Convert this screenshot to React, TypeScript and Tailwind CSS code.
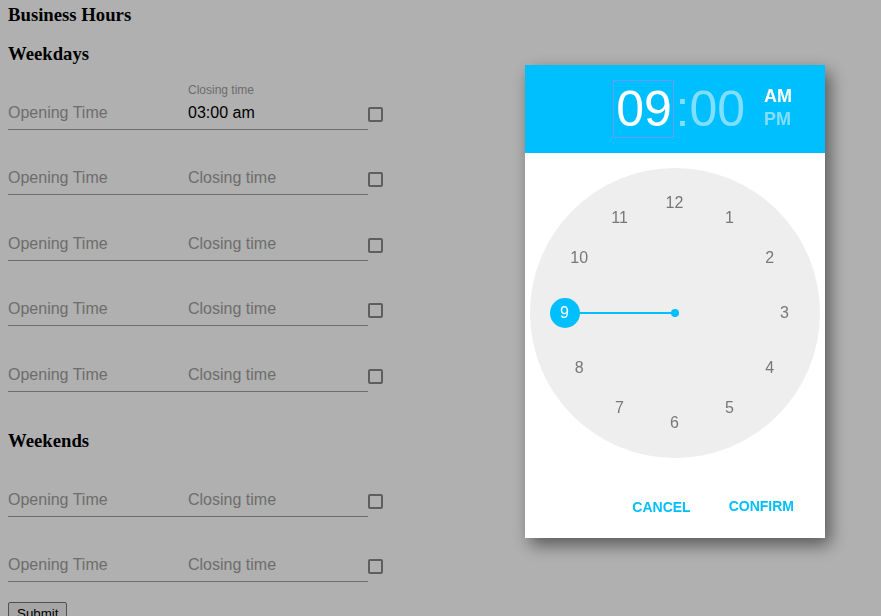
import React from "react";

const sans = "font-['Liberation_Sans',Arial,sans-serif]";
const serif = "font-['Liberation_Serif','Times_New_Roman',serif]";

type RowProps = { closing?: string };

const HoursRow = ({ closing }: RowProps) => {
  return (
    <div className="flex items-end h-[65.5px]">
      <div className="w-[180px] border-b border-[#9e9e9e]">
        <input
          readOnly
          placeholder="Opening Time"
          className={`${sans} block w-full bg-transparent outline-none text-[16px] leading-[19px] pt-[6px] pb-[7px] placeholder:text-[#9e9e9e]`}
        />
      </div>
      <div className="w-[180px] border-b border-[#9e9e9e]">
        {closing && (
          <div className={`${sans} text-[12px] leading-[14px] text-[#9e9e9e]`}>
            Closing time
          </div>
        )}
        <input
          readOnly
          value={closing ?? ""}
          placeholder="Closing time"
          className={`${sans} block w-full bg-transparent outline-none text-[16px] leading-[19px] pt-[6px] pb-[7px] text-black placeholder:text-[#9e9e9e]`}
        />
      </div>
      <input
        type="checkbox"
        className="appearance-none w-[15px] h-[15px] border-2 border-[#888] rounded-[2px] mb-[8px]"
      />
    </div>
  );
};

const ClockFace = () => {
  const hours = [12, 1, 2, 3, 4, 5, 6, 7, 8, 9, 10, 11];
  const r = 110;
  return (
    <div className="relative w-[290px] h-[290px] rounded-full bg-[#eeeeee] mx-auto">
      {/* hand */}
      <div className="absolute left-[34px] top-[144px] w-[111px] h-[2px] bg-[#00bfff]" />
      <div className="absolute left-[141px] top-[141px] w-[8px] h-[8px] rounded-full bg-[#00bfff]" />
      {hours.map((h, i) => {
        const a = (i * Math.PI) / 6;
        const x = 144.5 + r * Math.sin(a);
        const y = 145 - r * Math.cos(a);
        const selected = h === 9;
        return (
          <div
            key={h}
            className={`${sans} absolute w-[30px] h-[30px] -ml-[15px] -mt-[15px] flex items-center justify-center rounded-full text-[16px] ${
              selected ? "bg-[#00bfff] text-white" : "text-[#777]"
            }`}
            style={{ left: x, top: y }}
          >
            {h}
          </div>
        );
      })}
    </div>
  );
};

const TimePicker = () => {
  return (
    <div className="absolute left-[525px] top-[65px] w-[300px] h-[473px] bg-white shadow-[5px_7px_16px_rgba(0,0,0,0.5)] flex flex-col">
      <div className={`${sans} h-[88px] bg-[#00bfff] flex items-center justify-end pr-[33px]`}>
        <div className="flex items-center">
          <span className="border border-[#6a9cf5] h-[58px] w-[61px] flex items-center justify-center text-[50px] leading-none text-white">
            09
          </span>
          <span className="text-[50px] leading-none text-[#80dfff] ml-[1px]">:00</span>
        </div>
        <div className="flex flex-col ml-[19px] text-[18px] font-bold leading-[23px] mt-[-2px]">
          <span className="text-white -mt-[1px]">AM</span>
          <span className="text-[#80dfff]">PM</span>
        </div>
      </div>
      <div className="pt-[15px]">
        <ClockFace />
      </div>
      <div className={`${sans} flex justify-end items-center gap-[38px] pr-[31px] mt-[37px] text-[14px] font-bold text-[#00bfff]`}>
        <button className="mt-[2px]">CANCEL</button>
        <button>CONFIRM</button>
      </div>
    </div>
  );
};

export default function App() {
  return (
    <div className="relative min-h-[616px] bg-white overflow-hidden">
      <div className="px-2">
        <h3 className={`${serif} font-bold text-[18.72px] leading-[21px] mt-[4px]`}>Business Hours</h3>
        <h3 className={`${serif} font-bold text-[18.72px] leading-[21px] mt-[18px]`}>Weekdays</h3>
        <HoursRow closing="03:00 am" />
        <HoursRow />
        <HoursRow />
        <HoursRow />
        <HoursRow />
        <h3 className={`${serif} font-bold text-[18.72px] leading-[21px] mt-[38.5px]`}>Weekends</h3>
        <HoursRow />
        <HoursRow />
        <button
          className={`${sans} mt-[20px] text-[13.33px] px-[8px] py-[1px] border border-[#767676] rounded-[2px] bg-[#efefef] text-black`}
        >
          Submit
        </button>
      </div>
      <div className="fixed inset-0 bg-black/[0.31]">
        <TimePicker />
      </div>
    </div>
  );
}
